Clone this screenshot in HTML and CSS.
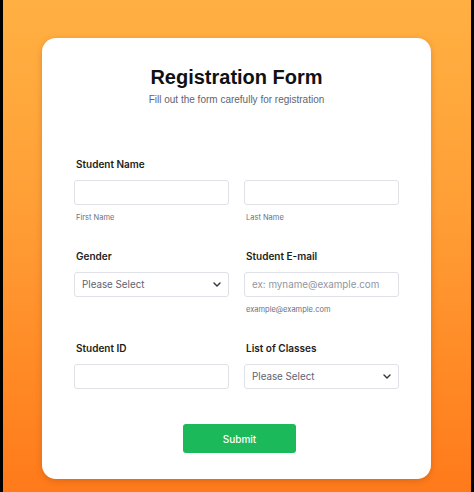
FILE: index.html
```html
<!DOCTYPE html>
<html>
<head>
<meta charset="utf-8">
<link rel="stylesheet" href="styles.css">
</head>
<body>
<div class="stage">
  <form class="card">
    <header class="head">
      <h1 class="title">Registration Form</h1>
      <p class="subtitle">Fill out the form carefully for registration</p>
    </header>

    <div class="row">
      <div class="field">
        <div class="label">Student Name</div>
        <div class="input"></div>
        <div class="hint">First Name</div>
      </div>
      <div class="field">
        <div class="label label-spacer">&nbsp;</div>
        <div class="input"></div>
        <div class="hint">Last Name</div>
      </div>
    </div>

    <div class="row">
      <div class="field">
        <div class="label">Gender</div>
        <div class="input select"><span class="sel-text">Please Select</span>
          <svg class="chev" width="8" height="5" viewBox="0 0 8 5"><path d="M1 1l3 3 3-3" fill="none" stroke="#333" stroke-width="1.4" stroke-linecap="round" stroke-linejoin="round"/></svg>
        </div>
      </div>
      <div class="field">
        <div class="label">Student E-mail</div>
        <div class="input"><span class="placeholder">ex: myname@example.com</span></div>
        <div class="hint">example@example.com</div>
      </div>
    </div>

    <div class="row row-last">
      <div class="field">
        <div class="label">Student ID</div>
        <div class="input"></div>
      </div>
      <div class="field">
        <div class="label">List of Classes</div>
        <div class="input select"><span class="sel-text">Please Select</span>
          <svg class="chev" width="8" height="5" viewBox="0 0 8 5"><path d="M1 1l3 3 3-3" fill="none" stroke="#333" stroke-width="1.4" stroke-linecap="round" stroke-linejoin="round"/></svg>
        </div>
      </div>
    </div>

    <div class="actions">
      <div class="submit">Submit</div>
    </div>
  </form>
</div>
</body>
</html>
```

FILE: styles.css
```css
* { box-sizing: border-box; }
html, body {
  margin: 0;
  padding: 0;
  background: #000;
}
body {
  width: 474px;
  height: 492px;
  overflow: hidden;
  padding: 0 3px;
}
.stage {
  height: 492px;
  background: linear-gradient(180deg, #ffb042 0%, #ffa037 40%, #ff8a26 75%, #ff7a1b 100%);
  padding-top: 38px;
}
.card {
  display: block;
  width: 389px;
  height: 441px;
  margin: 0 0 0 39px;
  background: #fff;
  border-radius: 14px;
  box-shadow: 0 2px 6px rgba(120, 50, 0, 0.25);
  padding: 27px 32px 26px;
  font-family: Inter, "Liberation Sans", sans-serif;
}
.head {
  text-align: center;
  margin-bottom: 49px;
}
.title {
  margin: 0;
  font-family: "Liberation Sans", Arial, sans-serif;
  font-weight: 700;
  font-size: 20px;
  line-height: 24px;
  color: #111;
}
.subtitle {
  margin: 4px 0 0;
  font-family: "Liberation Sans", Arial, sans-serif;
  font-size: 10px;
  line-height: 14px;
  color: #5f6470;
}
.row {
  display: grid;
  grid-template-columns: 155px 155px;
  column-gap: 15px;
  margin-bottom: 24px;
}
.row-last { margin-bottom: 35px; }
.field {
  display: flex;
  flex-direction: column;
}
.label {
  font-size: 10px;
  font-weight: 600;
  line-height: 16px;
  height: 16px;
  color: #1c1d22;
  margin: 0 0 8px 2px;
  white-space: nowrap;
}
.input {
  height: 25px;
  border: 1px solid #dfe1e6;
  border-radius: 3px;
  background: #fff;
  display: flex;
  align-items: center;
  padding: 0 7px;
  font-size: 9.8px;
}
.placeholder {
  color: #9096a2;
}
.select {
  justify-content: space-between;
  padding-right: 6px;
}
.sel-text {
  color: #5d6370;
}
.chev { display: block; margin-right: 1px; }
.hint {
  margin: 7px 0 0 2px;
  font-size: 7.5px;
  line-height: 12px;
  color: #6b7080;
}
.actions {
  display: flex;
  justify-content: center;
}
.submit {
  width: 113px;
  height: 29px;
  margin-left: 6px;
  background: #1cb95b;
  border-radius: 3px;
  color: #fff;
  font-size: 10px;
  font-weight: 500;
  display: flex;
  align-items: center;
  justify-content: center;
}
```
